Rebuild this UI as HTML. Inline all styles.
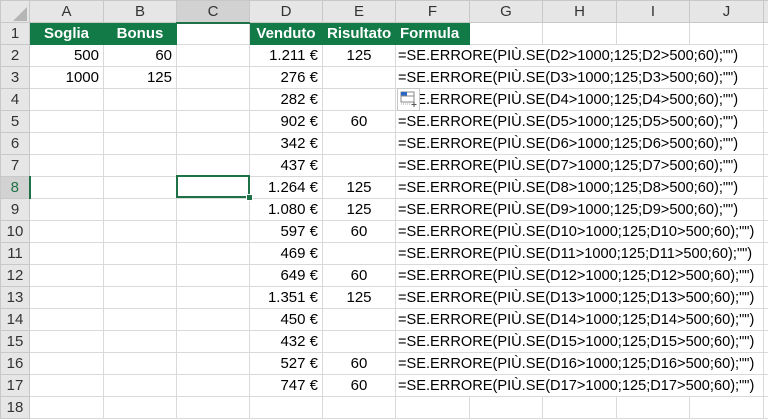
<!DOCTYPE html>
<html><head><meta charset="utf-8"><style>
body{margin:0;background:#fff;width:768px;height:408px;overflow:hidden;font-family:"Liberation Sans",sans-serif;position:relative;}
table{border-collapse:collapse;table-layout:fixed;position:absolute;left:0;top:0;width:783px;}
td{border:1px solid #d9d9d9;height:21px;padding:0 4px;font-size:15px;color:#000;white-space:nowrap;overflow:visible;box-sizing:border-box;}
tr.h td{background:#e6e6e6;text-align:center;color:#333;border-color:#c8c8c8;font-size:15px;}
td.rh{background:#e6e6e6;text-align:center;color:#333;border-color:#c8c8c8;padding:0;}
td.g{background:#127a46;color:#fff;font-weight:bold;border-color:#127a46;}
.r{text-align:right}.c{text-align:center}
td.f{padding-left:2px;font-size:14.6px;}
</style></head><body>
<table>
<colgroup><col style="width:29px"><col style="width:74px"><col style="width:73px"><col style="width:73px"><col style="width:73px"><col style="width:73px"><col style="width:74px"><col style="width:73px"><col style="width:74px"><col style="width:73px"><col style="width:74px"><col style="width:20px"></colgroup>
<tr class="h" style="height:22px"><td style="background:#e6e6e6"><svg width="14" height="14" style="position:absolute;left:12px;top:6px"><path d="M14 0V14H0Z" fill="#b5b5b5"/></svg></td><td>A</td><td>B</td><td style="background:#d2d2d2;border-bottom:2px solid #1e7145">C</td><td>D</td><td>E</td><td>F</td><td>G</td><td>H</td><td>I</td><td>J</td><td></td></tr>
<tr style="height:22px"><td class="rh">1</td><td class="g c">Soglia</td><td class="g c">Bonus</td><td></td><td class="g c">Venduto</td><td class="g c">Risultato</td><td class="g">Formula</td><td></td><td></td><td></td><td></td><td></td></tr>
<tr style="height:22px"><td class="rh">2</td><td class="r">500</td><td class="r">60</td><td></td><td class="r">1.211 €</td><td class="c">125</td><td colspan="5" class="f">=SE.ERRORE(PIÙ.SE(D2&gt;1000;125;D2&gt;500;60);"")</td><td></td></tr>
<tr style="height:22px"><td class="rh">3</td><td class="r">1000</td><td class="r">125</td><td></td><td class="r">276 €</td><td class="c"></td><td colspan="5" class="f">=SE.ERRORE(PIÙ.SE(D3&gt;1000;125;D3&gt;500;60);"")</td><td></td></tr>
<tr style="height:22px"><td class="rh">4</td><td></td><td></td><td></td><td class="r">282 €</td><td class="c"></td><td colspan="5" class="f">=SE.ERRORE(PIÙ.SE(D4&gt;1000;125;D4&gt;500;60);"")</td><td></td></tr>
<tr style="height:22px"><td class="rh">5</td><td></td><td></td><td></td><td class="r">902 €</td><td class="c">60</td><td colspan="5" class="f">=SE.ERRORE(PIÙ.SE(D5&gt;1000;125;D5&gt;500;60);"")</td><td></td></tr>
<tr style="height:22px"><td class="rh">6</td><td></td><td></td><td></td><td class="r">342 €</td><td class="c"></td><td colspan="5" class="f">=SE.ERRORE(PIÙ.SE(D6&gt;1000;125;D6&gt;500;60);"")</td><td></td></tr>
<tr style="height:22px"><td class="rh">7</td><td></td><td></td><td></td><td class="r">437 €</td><td class="c"></td><td colspan="5" class="f">=SE.ERRORE(PIÙ.SE(D7&gt;1000;125;D7&gt;500;60);"")</td><td></td></tr>
<tr style="height:22px"><td class="rh" style="background:#d2d2d2;color:#1e7145;border-right:2px solid #1e7145">8</td><td></td><td></td><td></td><td class="r">1.264 €</td><td class="c">125</td><td colspan="5" class="f">=SE.ERRORE(PIÙ.SE(D8&gt;1000;125;D8&gt;500;60);"")</td><td></td></tr>
<tr style="height:22px"><td class="rh">9</td><td></td><td></td><td></td><td class="r">1.080 €</td><td class="c">125</td><td colspan="5" class="f">=SE.ERRORE(PIÙ.SE(D9&gt;1000;125;D9&gt;500;60);"")</td><td></td></tr>
<tr style="height:22px"><td class="rh">10</td><td></td><td></td><td></td><td class="r">597 €</td><td class="c">60</td><td colspan="5" class="f">=SE.ERRORE(PIÙ.SE(D10&gt;1000;125;D10&gt;500;60);"")</td><td></td></tr>
<tr style="height:22px"><td class="rh">11</td><td></td><td></td><td></td><td class="r">469 €</td><td class="c"></td><td colspan="5" class="f">=SE.ERRORE(PIÙ.SE(D11&gt;1000;125;D11&gt;500;60);"")</td><td></td></tr>
<tr style="height:22px"><td class="rh">12</td><td></td><td></td><td></td><td class="r">649 €</td><td class="c">60</td><td colspan="5" class="f">=SE.ERRORE(PIÙ.SE(D12&gt;1000;125;D12&gt;500;60);"")</td><td></td></tr>
<tr style="height:22px"><td class="rh">13</td><td></td><td></td><td></td><td class="r">1.351 €</td><td class="c">125</td><td colspan="5" class="f">=SE.ERRORE(PIÙ.SE(D13&gt;1000;125;D13&gt;500;60);"")</td><td></td></tr>
<tr style="height:22px"><td class="rh">14</td><td></td><td></td><td></td><td class="r">450 €</td><td class="c"></td><td colspan="5" class="f">=SE.ERRORE(PIÙ.SE(D14&gt;1000;125;D14&gt;500;60);"")</td><td></td></tr>
<tr style="height:22px"><td class="rh">15</td><td></td><td></td><td></td><td class="r">432 €</td><td class="c"></td><td colspan="5" class="f">=SE.ERRORE(PIÙ.SE(D15&gt;1000;125;D15&gt;500;60);"")</td><td></td></tr>
<tr style="height:22px"><td class="rh">16</td><td></td><td></td><td></td><td class="r">527 €</td><td class="c">60</td><td colspan="5" class="f">=SE.ERRORE(PIÙ.SE(D16&gt;1000;125;D16&gt;500;60);"")</td><td></td></tr>
<tr style="height:22px"><td class="rh">17</td><td></td><td></td><td></td><td class="r">747 €</td><td class="c">60</td><td colspan="5" class="f">=SE.ERRORE(PIÙ.SE(D17&gt;1000;125;D17&gt;500;60);"")</td><td></td></tr>
<tr style="height:22px"><td class="rh">18</td><td></td><td></td><td></td><td></td><td></td><td></td><td></td><td></td><td></td><td></td><td></td></tr>
</table>
<div style="position:absolute;left:176px;top:175px;width:70px;height:19px;border:2px solid #1e7145;"></div>
<div style="position:absolute;left:246px;top:194px;width:5px;height:5px;background:#1e7145;border:1px solid #fff;"></div>
<div style="position:absolute;left:397px;top:88px;width:23px;height:23px;background:#fff;border:1px solid #c6c6c6;box-sizing:border-box;">
<svg width="21" height="21" style="position:absolute;left:0;top:0"><rect x="3" y="3" width="13" height="10" fill="#fff" stroke="#888"/><rect x="3" y="3" width="6" height="4" fill="#2b66c4"/><line x1="3" y1="7" x2="16" y2="7" stroke="#888"/><line x1="3" y1="15" x2="12" y2="15" stroke="#aaa" stroke-dasharray="1,1"/><path d="M16 13v5M13.5 15.5h5" stroke="#555"/></svg></div>
</body></html>
